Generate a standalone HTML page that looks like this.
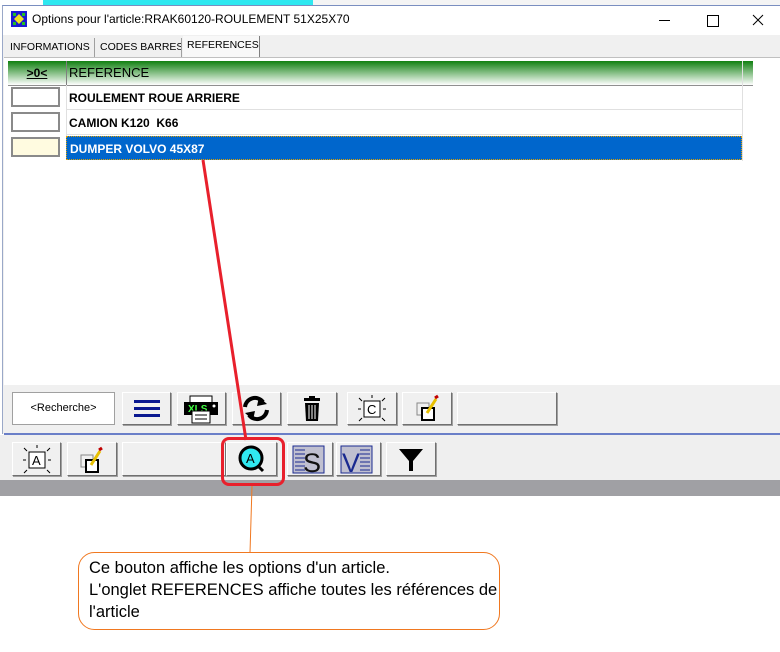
<!DOCTYPE html>
<html><head><meta charset="utf-8"><style>
body{margin:0;width:780px;height:652px;background:#fff;position:relative;overflow:hidden;font-family:"Liberation Sans",sans-serif}
.a{position:absolute;white-space:nowrap}
.btn{position:absolute;background:#f0f0f0;border:1px solid;border-color:#fff #707070 #707070 #fff;box-sizing:border-box;box-shadow:1px 1px 0 #a0a0a0}
.row{position:absolute;left:66px;width:676px;height:24px;font-weight:bold;font-size:12px;line-height:24px;padding-left:3px;box-sizing:border-box;border-bottom:1px solid #e0e0e0}
.chk{position:absolute;left:11px;width:49px;height:20px;border:2px solid #8a8a8a;box-sizing:border-box;background:#fff}
.tab{position:absolute;font-size:10.5px;line-height:19px;white-space:nowrap;box-sizing:border-box;overflow:hidden}
</style></head><body>
<div class="a" style="left:43px;top:0;width:270px;height:6px;background:#2ee8f0"></div>
<div class="a" style="left:313px;top:0;width:467px;height:6px;background:#f4f4f4"></div>
<div class="a" style="left:2px;top:5px;width:778px;height:429px;background:#f0f0f0;border-top:1px solid #7a8ec0;border-left:1px solid #9aa8c8;box-sizing:border-box"></div>
<div class="a" style="left:3px;top:6px;width:777px;height:29px;background:#fff"></div>
<svg class="a" style="left:11px;top:11px" width="16" height="16"><rect width="16" height="16" fill="#1a1ad0"/><path d="M8 3L13 8L8 13L3 8Z" fill="#f0e020"/><rect x="2" y="2" width="3" height="3" fill="#20c020"/><rect x="11" y="2" width="3" height="3" fill="#20c020"/><rect x="2" y="11" width="3" height="3" fill="#20c020"/><rect x="11" y="11" width="3" height="3" fill="#20c020"/></svg>
<div class="a" style="left:32px;top:12px;font-size:12px;color:#000">Options pour l'article:RRAK60120-ROULEMENT 51X25X70</div>
<div class="a" style="left:659px;top:20px;width:11px;height:1px;background:#000"></div>
<div class="a" style="left:707px;top:15px;width:10px;height:10px;border:1px solid #000"></div>
<svg class="a" style="left:752px;top:14px" width="12" height="12"><path d="M1 1L11 11M11 1L1 11" stroke="#000" stroke-width="1"/></svg>
<div class="tab" style="left:6px;top:38px;width:89px;height:19px;border-right:1px solid #a0a0a0;padding-left:4px">INFORMATIONS</div>
<div class="tab" style="left:96px;top:38px;width:86px;height:19px;border-right:1px solid #a0a0a0;padding-left:4px">CODES BARRES</div>
<div class="tab" style="left:183px;top:36px;width:77px;height:21px;background:#f8f8f8;border-right:1px solid #808080;padding-left:4px">REFERENCES</div>
<div class="a" style="left:4px;top:57px;width:776px;height:328px;background:#fff;border-top:1px solid #c0c0c0"></div>
<div class="a" style="left:8px;top:61px;width:745px;height:24px;background:linear-gradient(#108010,#fff);border-bottom:1px solid #909090"></div>
<div class="a" style="left:66px;top:61px;width:1px;height:24px;background:#808080"></div>
<div class="a" style="left:8px;top:61px;width:58px;height:24px;font-size:12px;font-weight:bold;text-align:center;line-height:24px;text-decoration:underline">&gt;0&lt;</div>
<div class="a" style="left:69px;top:61px;font-size:13px;line-height:24px">REFERENCE</div>
<div class="a" style="left:66px;top:85px;width:1px;height:75px;background:#e0e0e0"></div>
<div class="row" style="top:86px">ROULEMENT ROUE ARRIERE</div>
<div class="row" style="top:111px">CAMION K120&nbsp; K66</div>
<div class="row" style="top:136px;background:#0066cc;color:#fff;border:1px dotted #e0a000">DUMPER VOLVO 45X87</div>
<div class="chk" style="top:87px"></div>
<div class="chk" style="top:112px"></div>
<div class="chk" style="top:137px;background:#fffbe0"></div>
<div class="a" style="left:742px;top:61px;width:1px;height:100px;background:#e0e0e0"></div>
<div class="a" style="left:4px;top:385px;width:776px;height:48px;background:#f0f0f0;border-bottom:2px solid #6a7fc8"></div>
<div class="a" style="left:12px;top:392px;width:103px;height:33px;background:#fff;border:1px solid #a0a0a0;box-sizing:border-box;font-size:11px;text-align:center;line-height:31px">&lt;Recherche&gt;</div>
<div class="btn" style="left:122px;top:392px;width:49px;height:33px"><div class="a" style="left:11px;top:7px;width:26px;height:3px;background:#0a1890;box-shadow:0 7px 0 #0a1890,0 14px 0 #0a1890"></div></div>
<div class="btn" style="left:177px;top:392px;width:49px;height:33px"><svg width="47" height="31"><rect x="12" y="3" width="22" height="8" fill="#fff" stroke="#000"/><rect x="6" y="9" width="34" height="13" fill="#000"/><text x="10" y="19" font-size="10" font-weight="bold" fill="#4f4" font-family="Liberation Sans">XLS</text><circle cx="36" cy="13" r="1.5" fill="#fff"/><rect x="14" y="18" width="18" height="12" fill="#fff" stroke="#000"/><path d="M17 22h12M17 26h12" stroke="#000"/></svg></div>
<div class="btn" style="left:232px;top:392px;width:49px;height:33px"><svg width="47" height="31"><path d="M12 14A10 10 0 0 1 30 9M34 17A10 10 0 0 1 16 22" stroke="#000" stroke-width="4" fill="none"/><path d="M26 4L34 11L24 13Z M20 27L12 20L22 18Z" fill="#000"/></svg></div>
<div class="btn" style="left:287px;top:392px;width:50px;height:33px"><svg width="48" height="31"><rect x="16" y="5" width="16" height="3" fill="#000"/><rect x="21" y="3" width="6" height="3" fill="#000"/><path d="M17 10h14l-1 18h-12z" fill="#000"/><path d="M21 12v14M24 12v14M27 12v14" stroke="#fff"/></svg></div>
<div class="btn" style="left:347px;top:392px;width:50px;height:33px"><svg width="48" height="31"><rect x="16" y="8" width="16" height="16" fill="#fff" stroke="#000"/><text x="19" y="21" font-size="13" font-family="Liberation Sans">C</text><path d="M10 16h3M35 16h3M11 5l3 3M37 5l-3 3M11 28l3-3M37 28l-3-3M24 2v3" stroke="#000"/></svg></div>
<div class="btn" style="left:402px;top:392px;width:50px;height:33px"><svg width="48" height="31"><rect x="14" y="10" width="12" height="12" fill="none" stroke="#888"/><rect x="19" y="15" width="12" height="12" fill="#fff" stroke="#000" stroke-width="2"/><path d="M24 20L33 6" stroke="#e8c000" stroke-width="3"/><path d="M32 5l3-2" stroke="#c00000" stroke-width="3"/></svg></div>
<div class="btn" style="left:457px;top:392px;width:100px;height:33px"></div>
<div class="a" style="left:0;top:435px;width:780px;height:45px;background:#efefef"></div>
<div class="a" style="left:0;top:480px;width:780px;height:16px;background:#a0a0a4"></div>
<div class="btn" style="left:12px;top:442px;width:49px;height:34px"><svg width="47" height="32"><rect x="16" y="9" width="16" height="16" fill="#fff" stroke="#000"/><text x="19" y="22" font-size="13" font-family="Liberation Sans">A</text><path d="M10 17h3M35 17h3M11 5l3 3M37 5l-3 3M11 30l3-3M37 30l-3-3M24 2v3" stroke="#000"/></svg></div>
<div class="btn" style="left:67px;top:442px;width:50px;height:34px"><svg width="48" height="32"><rect x="13" y="12" width="12" height="12" fill="none" stroke="#888"/><rect x="18" y="17" width="12" height="12" fill="#fff" stroke="#000" stroke-width="2"/><path d="M23 22L32 8" stroke="#e8c000" stroke-width="3"/><path d="M31 7l3-2" stroke="#c00000" stroke-width="3"/></svg></div>
<div class="btn" style="left:122px;top:442px;width:104px;height:34px"></div>
<div class="btn" style="left:226px;top:442px;width:51px;height:34px"><svg width="49" height="32"><circle cx="24" cy="15" r="11" fill="#30e8f0" stroke="#000" stroke-width="3"/><path d="M31 23l5 5" stroke="#000" stroke-width="3"/><text x="19" y="20" font-size="13" font-family="Liberation Sans">A</text></svg></div>
<div class="btn" style="left:287px;top:442px;width:46px;height:34px"><svg width="44" height="32"><rect x="5" y="3" width="31" height="27" fill="#c0c0d0" stroke="#1a2a90"/><path d="M7 7h10M7 11h10M7 15h10M7 19h10M7 23h10M7 27h10" stroke="#1a2a90"/><text x="15" y="29" font-size="27" font-family="Liberation Sans" fill="#111">S</text></svg></div>
<div class="btn" style="left:336px;top:442px;width:45px;height:34px"><svg width="43" height="32"><rect x="4" y="3" width="31" height="27" fill="#c0c0d0" stroke="#1a2a90"/><path d="M23 7h10M23 11h10M23 15h10M23 19h10M23 23h10M23 27h10" stroke="#1a2a90"/><text x="5" y="29" font-size="27" font-family="Liberation Sans" fill="#1a2a90">V</text></svg></div>
<div class="btn" style="left:386px;top:442px;width:50px;height:34px"><svg width="48" height="32"><path d="M12 6h24L26 18v10h-4V18z" fill="#000"/></svg></div>
<div class="a" style="left:221px;top:437px;width:58px;height:43px;border:3px solid #e8202c;border-radius:8px"></div>
<svg class="a" style="left:0;top:0" width="780" height="652"><path d="M203 160L246 440" stroke="#e8202c" stroke-width="3"/><path d="M252 486L250 553" stroke="#f07820" stroke-width="1"/><rect x="78.5" y="552.5" width="421" height="77" rx="16" fill="#fff" stroke="#f07820"/></svg>
<div class="a" style="left:89px;top:557px;font-size:16.5px;line-height:22px;color:#000">Ce bouton affiche les options d'un article.<br>L'onglet REFERENCES affiche toutes les références de<br>l'article</div>
</body></html>
